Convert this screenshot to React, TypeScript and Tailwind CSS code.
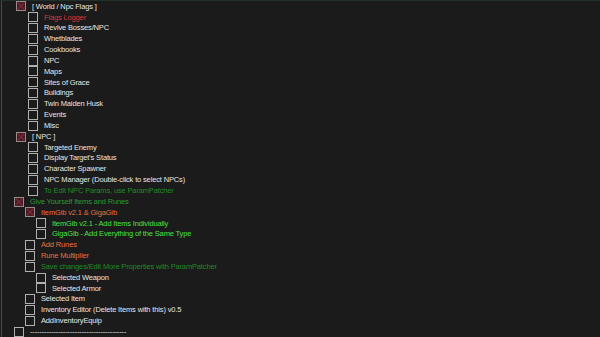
import React from "react";

type Row = { text: string; box: number; color: string; checked?: boolean };

const W = "text-[#e6e6e6]";
const rows: Row[] = [
  { text: "[ World / Npc Flags ]", box: 16, color: W, checked: true },
  { text: "Flags Logger", box: 28, color: "text-[#d8343a]" },
  { text: "Revive Bosses/NPC", box: 28, color: W },
  { text: "Whetblades", box: 28, color: W },
  { text: "Cookbooks", box: 28, color: W },
  { text: "NPC", box: 28, color: W },
  { text: "Maps", box: 28, color: W },
  { text: "Sites of Grace", box: 28, color: W },
  { text: "Buildings", box: 28, color: W },
  { text: "Twin Maiden Husk", box: 28, color: W },
  { text: "Events", box: 28, color: W },
  { text: "Misc", box: 28, color: W },
  { text: "[ NPC ]", box: 16, color: W, checked: true },
  { text: "Targeted Enemy", box: 28, color: W },
  { text: "Display Target's Status", box: 28, color: W },
  { text: "Character Spawner", box: 28, color: W },
  { text: "NPC Manager (Double-click to select NPCs)", box: 28, color: W },
  { text: "To Edit NPC Params, use ParamPatcher", box: 28, color: "text-[#1f8a26]" },
  { text: "Give Yourself Items and Runes", box: 14, color: "text-[#2a9a30]", checked: true },
  { text: "ItemGib v2.1 & GigaGib", box: 25, color: "text-[#e8703e]", checked: true },
  { text: "ItemGib v2.1 - Add Items Individually", box: 36, color: "text-[#4ae048]" },
  { text: "GigaGib - Add Everything of the Same Type", box: 36, color: "text-[#4ae048]" },
  { text: "Add Runes", box: 25, color: "text-[#e8703e]" },
  { text: "Rune Multiplier", box: 25, color: "text-[#e8703e]" },
  { text: "Save changes/Edit More Properties with ParamPatcher", box: 25, color: "text-[#1f8a26]" },
  { text: "Selected Weapon", box: 36, color: W },
  { text: "Selected Armor", box: 36, color: W },
  { text: "Selected Item", box: 25, color: W },
  { text: "Inventory Editor (Delete Items with this) v0.5", box: 25, color: W },
  { text: "AddInventoryEquip", box: 25, color: W },
  { text: "-----------------------------------------", box: 14, color: W },
];

function Box({ checked }: { checked?: boolean }) {
  if (checked) {
    return (
      <div className="w-[10px] h-[10px] shrink-0 border border-[#9a8a8c] bg-[#4a1b24] flex items-center justify-center">
        <svg width="8" height="8" viewBox="0 0 8 8">
          <path d="M1 1 L7 7 M7 1 L1 7" stroke="#7a2a36" strokeWidth="1.2" />
        </svg>
      </div>
    );
  }
  return <div className="w-[10px] h-[10px] shrink-0 border border-[#b0b0b0] bg-[#1b1b1b]" />;
}

export default function App() {
  return (
    <div
      className="w-[600px] h-[337px] overflow-hidden bg-[#1b1b1b]"
      style={{ fontFamily: '"Liberation Sans", Arial, sans-serif' }}
    >
      <div className="h-[1px] bg-[#20302a]" />
      <div className="flex h-[336px]">
        <div className="w-[1px] ml-[1px] bg-[#4a4a4a]" />
        <div className="flex flex-col">
          {rows.map((r, i) => (
            <div key={i} className="h-[10.9px] flex items-center" style={{ paddingLeft: r.box - 2 }}>
              <Box checked={r.checked} />
              <span className={`ml-[6px] text-[7.5px] tracking-[-0.15px] leading-none whitespace-nowrap ${r.color}`}>{r.text}</span>
            </div>
          ))}
        </div>
      </div>
    </div>
  );
}
